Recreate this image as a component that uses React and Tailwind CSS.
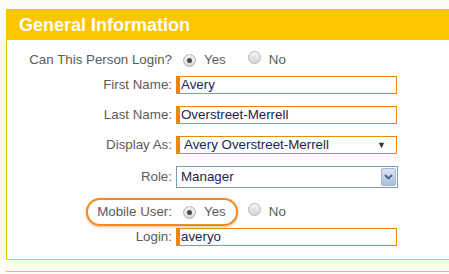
import React from "react";

function Radio({ checked }) {
  return (
    <span className="relative inline-flex w-[13px] h-[13px] rounded-full border border-[#b5b5b5] bg-gradient-to-b from-[#f4f4f4] to-[#d6d6d6] items-center justify-center shrink-0">
      {checked && <span className="w-[5px] h-[5px] rounded-full bg-[#4a4a4a]" />}
    </span>
  );
}

function Label({ children }) {
  return <div className="w-[165px] shrink-0 text-right text-[#5b5b5b]">{children}</div>;
}

function RadioPair({ yes }) {
  return (
    <div className="flex items-center pl-[11px]">
      <Radio checked={yes} />
      <span className="ml-[8px] text-[#5b5b5b]">Yes</span>
      <span className="ml-[22px]"><Radio checked={!yes} /></span>
      <span className="ml-[8px] text-[#5b5b5b]">No</span>
    </div>
  );
}

function TextField({ value }) {
  return (
    <div className="ml-[4px] w-[221px] h-[18px] border border-[#e8890c] border-l-[4px] pl-[1px] flex items-center text-[#1c2452]">
      {value}
    </div>
  );
}

export default function App() {
  return (
    <div className="w-[449px] h-[274px] overflow-hidden bg-[#fbfdf3] pt-[9px] pl-[6px] text-[13.33px] leading-[18px] font-['Liberation_Sans',Arial,sans-serif]">
      <div className="w-[460px]">
        <div className="h-[31px] bg-[#f9c600] pl-[13px] flex items-center text-white font-bold text-[18px]">
          General Information
        </div>
        <div className="bg-white border-l border-b border-[#f5c400] pt-[10px] pb-[13px]">
          <div className="flex items-center h-[20px]">
            <Label>Can This Person Login?</Label>
            <RadioPair yes />
          </div>
          <div className="flex items-center h-[18px] mt-[6px]">
            <Label>First Name:</Label>
            <TextField value="Avery" />
          </div>
          <div className="flex items-center h-[18px] mt-[12px]">
            <Label>Last Name:</Label>
            <TextField value="Overstreet-Merrell" />
          </div>
          <div className="flex items-center h-[18px] mt-[12px]">
            <Label>Display As:</Label>
            <div className="ml-[4px] w-[221px] h-[18px] border border-[#e8890c] border-l-[4px] pl-[4px] pr-[10px] flex items-center justify-between text-[#1c2452]">
              <span>Avery Overstreet-Merrell</span>
              <span className="text-[9px] text-[#333]">▼</span>
            </div>
          </div>
          <div className="flex items-center h-[22px] mt-[12px]">
            <Label>Role:</Label>
            <div className="ml-[4px] w-[222px] h-[22px] border border-[#7f9db9] pl-[4px] pr-[1px] flex items-center justify-between text-[#1c2452]">
              <span>Manager</span>
              <span className="w-[15px] h-[18px] rounded-[2px] border border-[#a6b7d6] bg-gradient-to-b from-[#dbe4f6] to-[#a9bce0] flex items-center justify-center">
                <svg width="9" height="6" viewBox="0 0 9 6">
                  <path d="M1 1 L4.5 4.5 L8 1" fill="none" stroke="#4d6185" strokeWidth="1.8" />
                </svg>
              </span>
            </div>
          </div>
          <div className="relative flex items-center h-[28px] mt-[10px]">
            <div className="absolute left-[79px] top-0 w-[152px] h-[28px] rounded-full border-2 border-[#f0891f] shadow-[0_1px_3px_rgba(180,100,20,0.45)]" />
            <Label>Mobile User:</Label>
            <RadioPair yes />
          </div>
          <div className="flex items-center h-[18px] mt-[2px]">
            <Label>Login:</Label>
            <TextField value="averyo" />
          </div>
        </div>
        <div className="mt-[11px] border-t border-[#f5c400] h-[4px]" />
      </div>
    </div>
  );
}
